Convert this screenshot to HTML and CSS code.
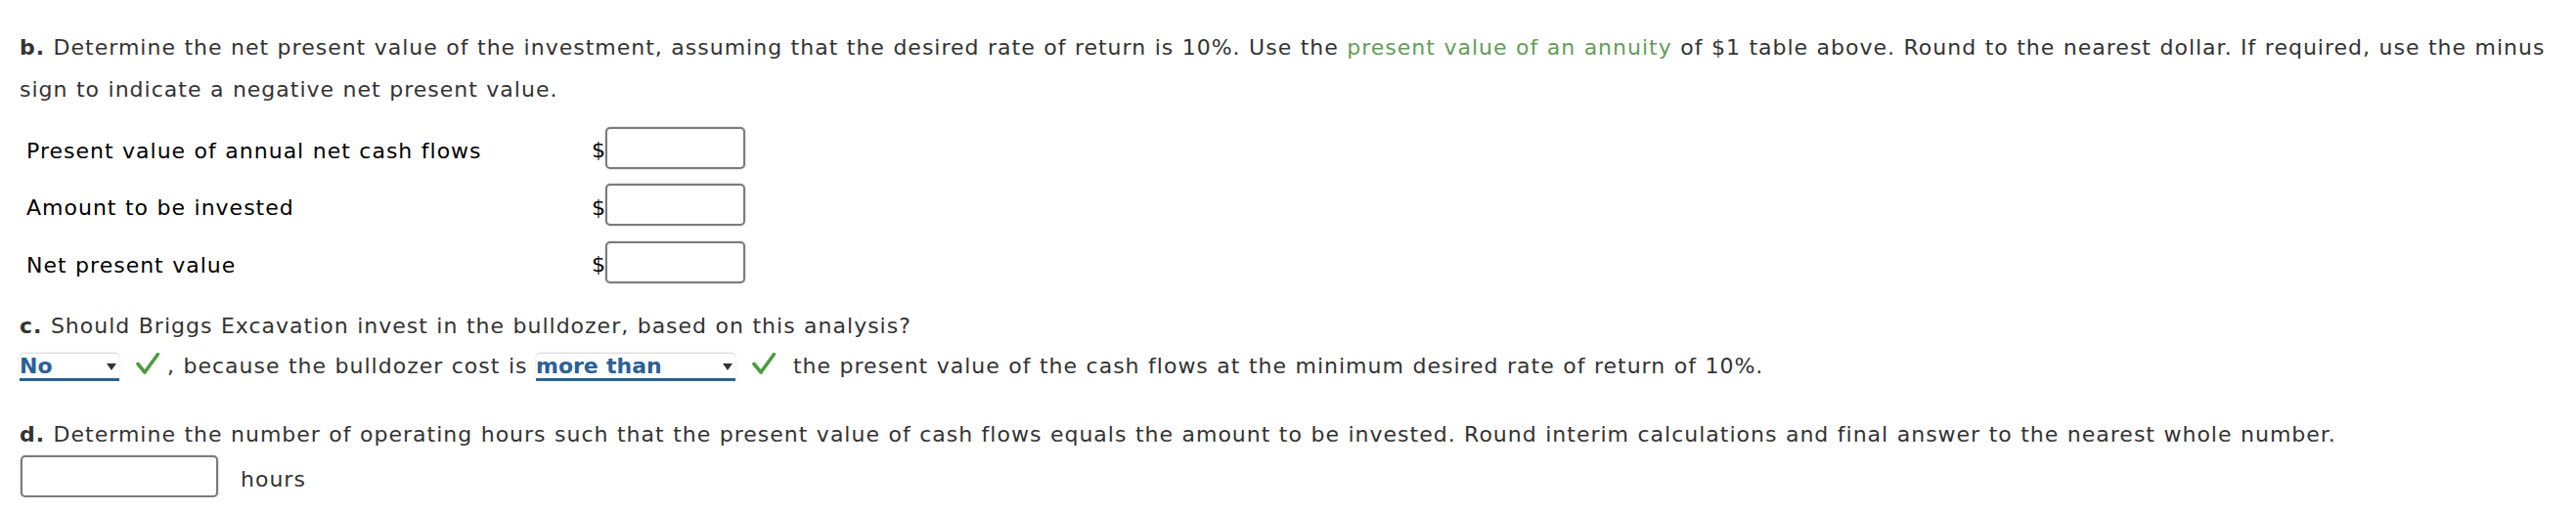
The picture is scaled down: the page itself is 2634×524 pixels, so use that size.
FILE: index.html
```html
<!DOCTYPE html>
<html>
<head>
<meta charset="utf-8">
<link rel="stylesheet" href="styles.css">
</head>
<body>
<div class="page">
  <p class="para para-b"><b>b.</b> Determine the net present value of the investment, assuming that the desired rate of return is 10%. Use the <span class="link">present value of an annuity</span> of $1 table above. Round to the nearest dollar. If required, use the minus sign to indicate a negative net present value.</p>

  <div class="npv-table">
    <div class="npv-row">
      <span class="npv-label">Present value of annual net cash flows</span>
      <span class="npv-cur">$</span><span class="box box-money"></span>
    </div>
    <div class="npv-row">
      <span class="npv-label">Amount to be invested</span>
      <span class="npv-cur">$</span><span class="box box-money"></span>
    </div>
    <div class="npv-row">
      <span class="npv-label">Net present value</span>
      <span class="npv-cur">$</span><span class="box box-money"></span>
    </div>
  </div>

  <p class="para para-c"><b>c.</b> Should Briggs Excavation invest in the bulldozer, based on this analysis?</p>
  <div class="answer-line">
    <span class="dd dd-no">No<span class="dd-arrow"></span></span><svg class="check" viewBox="0 0 24 22" width="24" height="22"><path d="M2 11.5 L9 20 L22.5 1.5" fill="none" stroke="#4e9b3f" stroke-width="3.6" stroke-linecap="round" stroke-linejoin="round"/></svg><span class="after-check">, because the bulldozer cost is </span><span class="dd dd-more">more than<span class="dd-arrow"></span></span><svg class="check" viewBox="0 0 24 22" width="24" height="22"><path d="M2 11.5 L9 20 L22.5 1.5" fill="none" stroke="#4e9b3f" stroke-width="3.6" stroke-linecap="round" stroke-linejoin="round"/></svg><span class="after-check2">the present value of the cash flows at the minimum desired rate of return of 10%.</span>
  </div>

  <p class="para para-d"><b>d.</b> Determine the number of operating hours such that the present value of cash flows equals the amount to be invested. Round interim calculations and final answer to the nearest whole number.</p>
  <div class="hours-line">
    <span class="box box-hours"></span><span class="hours-unit">hours</span>
  </div>
</div>
</body>
</html>
```

FILE: styles.css
```css
html, body {
  margin: 0;
  padding: 0;
  background: #ffffff;
}

.page {
  padding: 27px 20px 0 20px;
  font-family: "DejaVu Sans", Verdana, sans-serif;
  font-size: 22px;
  letter-spacing: 1px;
  word-spacing: 0.5px;
  color: #333333;
}

.para {
  margin: 0;
  line-height: 43px;
}

.para b {
  font-weight: bold;
}

.link {
  color: #629d5a;
}

.npv-table {
  margin-top: 9px;
  padding-left: 7px;
  color: #000000;
}

.npv-row {
  display: flex;
  align-items: center;
  height: 58.5px;
}

.npv-label {
  width: 578px;
  padding-top: 6px;
}

.npv-cur {
  width: 14px;
  line-height: 22px;
  padding-top: 6px;
}

.box {
  display: inline-block;
  box-sizing: border-box;
  height: 43px;
  border: 2px solid #7b7b7b;
  border-radius: 5px;
  background: #ffffff;
  box-shadow: 0 0 2px rgba(0, 0, 0, 0.35);
}

.box-money {
  width: 143px;
}

.para-c {
  margin-top: 14px;
}

.answer-line {
  line-height: 39px;
  height: 39px;
  white-space: nowrap;
}

.dd {
  display: inline-block;
  position: relative;
  box-sizing: border-box;
  font-weight: bold;
  letter-spacing: 0;
  color: #2a6199;
  line-height: 22px;
  padding: 2px 0 1px 0;
  border-bottom: 3px solid #2f5f8e;
  border-radius: 5px 5px 0 0;
  background: #ffffff;
  box-shadow: 0 -1px 2px rgba(0, 0, 0, 0.18);
  vertical-align: baseline;
}

.dd-no {
  width: 102px;
}

.dd-more {
  width: 204px;
}

.dd-arrow {
  position: absolute;
  right: 3px;
  top: 10px;
  width: 0;
  height: 0;
  border-left: 5px solid transparent;
  border-right: 5px solid transparent;
  border-top: 7px solid #333333;
}

.check {
  vertical-align: -1px;
  margin-left: 17px;
}

.after-check {
  margin-left: 8px;
}

.after-check2 {
  margin-left: 18px;
}

.para-d {
  margin-top: 29px;
}

.hours-line {
  display: flex;
  align-items: center;
  height: 43px;
  padding-left: 1px;
}

.box-hours {
  width: 202px;
}

.hours-unit {
  margin-left: 23px;
  padding-top: 6px;
}
```
